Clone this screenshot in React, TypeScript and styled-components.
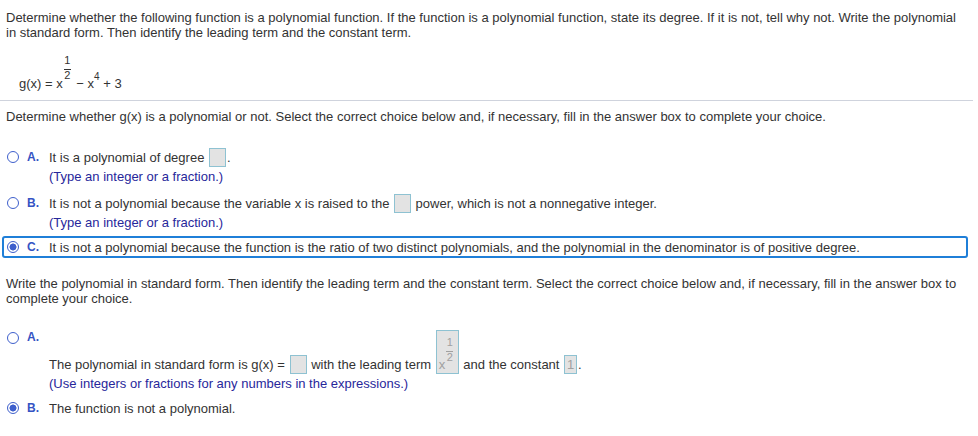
import React from "react";
import styled, { createGlobalStyle, css } from "styled-components";

const Global = createGlobalStyle`
  body {
    margin: 0;
    background: #ffffff;
    font-family: "Liberation Sans", Arial, sans-serif;
    font-size: 13px;
    color: #333333;
  }
`;

const Page = styled.div`
  padding: 10px 14px 20px 6px;
  line-height: 15px;
`;

const Para = styled.p<{ $top?: number }>`
  margin: ${(p) => p.$top ?? 0}px 0 0;
`;

const FormulaRow = styled.div`
  display: flex;
  align-items: flex-end;
  padding-left: 13px;
  margin-top: 15px;
  margin-bottom: 9px;
  white-space: pre;
`;

const Frac = styled.span<{ $lift: number }>`
  display: inline-flex;
  flex-direction: column;
  align-items: center;
  margin: 0 2px ${(p) => p.$lift}px 1px;
  font-size: 11px;
`;

const FracNum = styled.span`
  line-height: 10px;
`;

const FracBar = styled.span`
  width: 7px;
  height: 1px;
  background: currentColor;
  margin-top: 4px;
`;

const FracDen = styled.span`
  line-height: 8px;
  margin-top: 1px;
`;

const Sup = styled.span`
  font-size: 10px;
  line-height: 10px;
  margin-bottom: 9px;
`;

const Divider = styled.div`
  margin: 0 -9px 0 -6px;
  border-top: 1px solid #cfd3dd;
`;

const Choice = styled.div<{ $top: number; $boxed?: boolean }>`
  display: flex;
  align-items: flex-start;
  margin-top: ${(p) => p.$top}px;
  padding-left: 1px;
  ${(p) =>
    p.$boxed &&
    css`
      margin-left: -4px;
      margin-right: -4px;
      padding-left: 3px;
      border: 2px solid #1f7fd8;
      border-radius: 3px;
    `}
`;

const Radio = styled.span<{ $checked?: boolean; $h: number }>`
  flex: none;
  height: ${(p) => p.$h}px;
  display: flex;
  align-items: center;
  &::before {
    content: "";
    box-sizing: border-box;
    width: 12px;
    height: 12px;
    border-radius: 50%;
    border: 1px solid #3e5fcc;
    ${(p) =>
      p.$checked &&
      css`
        background: radial-gradient(circle, #3e5fcc 0 3.2px, #ffffff 3.8px);
      `}
  }
`;

const Letter = styled.span<{ $h: number }>`
  flex: none;
  width: 22px;
  margin-left: 8px;
  line-height: ${(p) => p.$h}px;
  color: #3553c4;
  font-weight: bold;
  font-size: 12px;
`;

const Body = styled.div`
  flex: 1;
`;

const Line = styled.div<{ $h?: number }>`
  display: flex;
  align-items: center;
  height: ${(p) => p.$h ?? 20}px;
  white-space: pre;
`;

const LowLine = styled.div`
  display: flex;
  align-items: flex-end;
  white-space: pre;
  line-height: 15px;
`;

const LowText = styled.span`
  padding-bottom: 2px;
`;

const Hint = styled.div<{ $top?: number }>`
  color: #27279b;
  line-height: 15px;
  margin-top: ${(p) => p.$top ?? 0}px;
`;

const Box = styled.span<{ $w?: number }>`
  box-sizing: border-box;
  display: inline-flex;
  align-items: center;
  justify-content: center;
  width: ${(p) => p.$w ?? 17}px;
  height: 19px;
  margin: 0 1px;
  background: #e3e3e3;
  border: 1px solid #8ec2d2;
  color: #a0a0a0;
  line-height: 17px;
`;

const TallBox = styled.span`
  box-sizing: border-box;
  display: inline-flex;
  align-items: flex-end;
  width: 23px;
  height: 44px;
  margin: 0 1px;
  padding: 0 0 1px 2px;
  background: #e3e3e3;
  border: 1px solid #8ec2d2;
  color: #a0a0a0;
`;

export default function App() {
  return (
    <Page>
      <Global />
      <Para>
        Determine whether the following function is a polynomial function. If the function is a polynomial function,
        state its degree. If it is not, tell why not. Write the polynomial in standard form. Then identify the leading
        term and the constant term.
      </Para>
      <FormulaRow>
        <span>g(x) = x</span>
        <Frac $lift={12}>
          <FracNum>1</FracNum>
          <FracBar />
          <FracDen>2</FracDen>
        </Frac>
        <span> − x</span>
        <Sup>4</Sup>
        <span> + 3</span>
      </FormulaRow>
      <Divider />
      <Para $top={8}>
        Determine whether g(x) is a polynomial or not. Select the correct choice below and, if necessary, fill in the
        answer box to complete your choice.
      </Para>

      <Choice $top={23}>
        <Radio $h={20} />
        <Letter $h={20}>A.</Letter>
        <Body>
          <Line>
            It is a polynomial of degree <Box />.
          </Line>
          <Hint $top={2}>(Type an integer or a fraction.)</Hint>
        </Body>
      </Choice>

      <Choice $top={9}>
        <Radio $h={20} />
        <Letter $h={20}>B.</Letter>
        <Body>
          <Line>
            It is not a polynomial because the variable x is raised to the <Box /> power, which is not a nonnegative
            integer.
          </Line>
          <Hint $top={2}>(Type an integer or a fraction.)</Hint>
        </Body>
      </Choice>

      <Choice $top={6} $boxed>
        <Radio $h={18} $checked />
        <Letter $h={18}>C.</Letter>
        <Body>
          <Line $h={18}>
            It is not a polynomial because the function is the ratio of two distinct polynomials, and the polynomial in
            the denominator is of positive degree.
          </Line>
        </Body>
      </Choice>

      <Para $top={18}>
        Write the polynomial in standard form. Then identify the leading term and the constant term. Select the correct
        choice below and, if necessary, fill in the answer box to complete your choice.
      </Para>

      <Choice $top={24}>
        <Radio $h={15} />
        <Letter $h={15}>A.</Letter>
        <Body>
          <LowLine>
            <LowText>The polynomial in standard form is g(x) = </LowText>
            <Box />
            <LowText> with the leading term </LowText>
            <TallBox>
              <span>x</span>
              <Frac $lift={11}>
                <FracNum>1</FracNum>
                <FracBar />
                <FracDen>2</FracDen>
              </Frac>
            </TallBox>
            <LowText> and the constant </LowText>
            <Box $w={13}>1</Box>
            <LowText>.</LowText>
          </LowLine>
          <Hint $top={2}>(Use integers or fractions for any numbers in the expressions.)</Hint>
        </Body>
      </Choice>

      <Choice $top={7}>
        <Radio $h={20} $checked />
        <Letter $h={20}>B.</Letter>
        <Body>
          <Line>The function is not a polynomial.</Line>
        </Body>
      </Choice>
    </Page>
  );
}
